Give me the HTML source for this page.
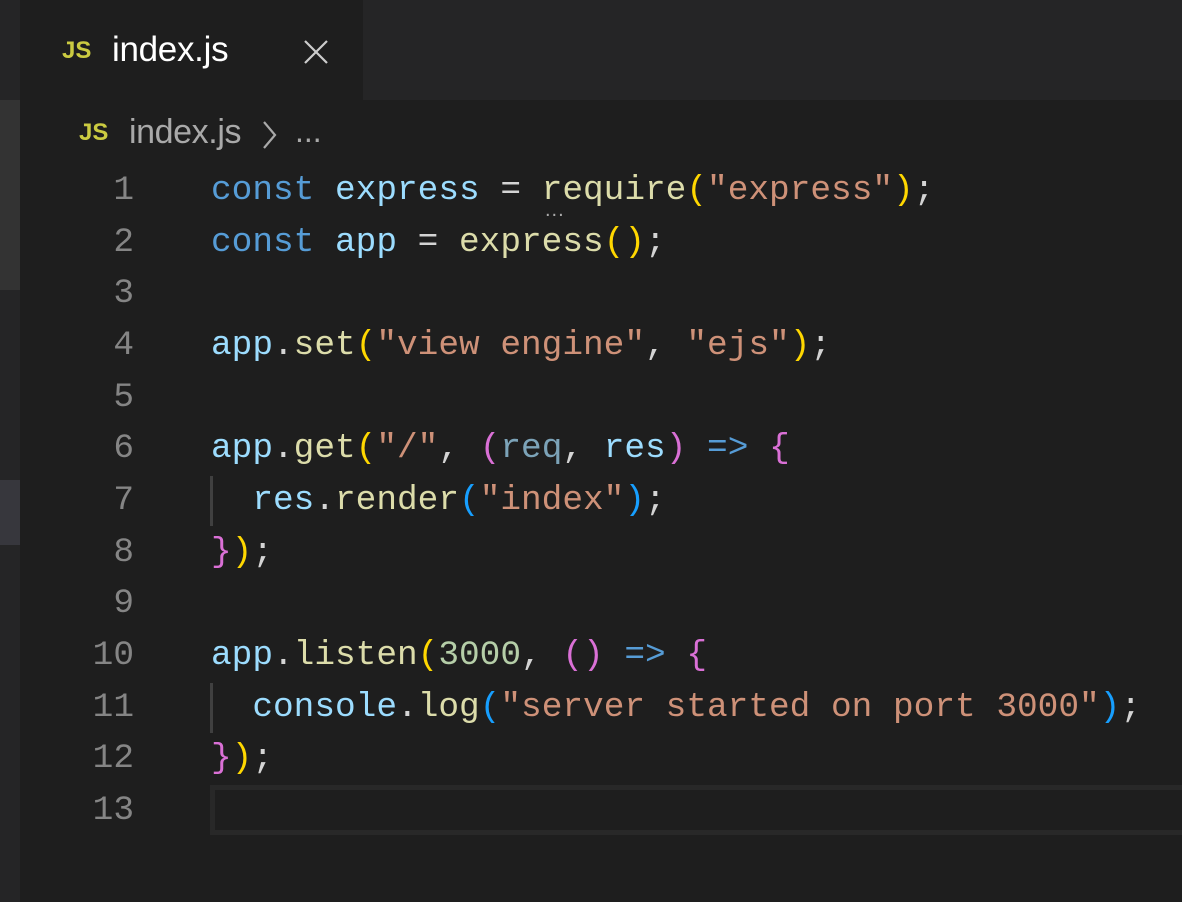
<!DOCTYPE html>
<html><head><style>
body{margin:0;width:1182px;height:902px;background:#1e1e1e;overflow:hidden;position:relative;font-family:"Liberation Sans",sans-serif}
.tabbar{position:absolute;left:0;top:0;width:1182px;height:100px;background:#252526}
.tab{position:absolute;left:20px;top:0;width:343px;height:100px;background:#1e1e1e}
.strip{position:absolute;left:0;top:100px;width:20px;height:802px;background:#252526}
.js{color:#cbcb41;font-weight:bold;position:absolute}
.code{position:absolute;left:0;top:165px;font-family:"Liberation Mono",monospace;font-size:34.45px;line-height:51.67px;white-space:pre}
.ln{position:absolute;left:60px;width:74px;text-align:right;color:#858585}
.l{position:absolute;left:211px;color:#d4d4d4}
.k{color:#569cd6}.v{color:#9cdcfe}.f{color:#dcdcaa}.s{color:#ce9178}.y{color:#ffd700}.p{color:#da70d6}.b{color:#179fff}.n{color:#b5cea8}
</style></head><body>
<div class="tabbar"></div>
<div class="tab"></div>
<div class="strip"></div>
<div style="position:absolute;left:0;top:100px;width:20px;height:190px;background:#333"></div>
<div style="position:absolute;left:0;top:480px;width:20px;height:65px;background:#37373d"></div>
<div class="js" style="left:62px;top:37px;font-size:24px">JS</div>
<div style="position:absolute;left:112px;top:30px;font-size:35px;color:#fff;letter-spacing:-0.3px">index.js</div>
<svg style="position:absolute;left:303px;top:39px" width="26" height="26"><path d="M2 2L24 24M24 2L2 24" stroke="#ccc" stroke-width="2.2"/></svg>
<div class="js" style="left:79px;top:119px;font-size:24px">JS</div>
<div style="position:absolute;left:129px;top:113px;font-size:34px;color:#a9a9a9;letter-spacing:-0.4px">index.js</div>
<svg style="position:absolute;left:262px;top:120px" width="16" height="30"><path d="M2 2L13 15L2 28" stroke="#a9a9a9" stroke-width="2.2" fill="none"/></svg>
<div style="position:absolute;left:295px;top:113px;font-size:32px;color:#a9a9a9">...</div>
<div style="position:absolute;left:210px;top:785px;width:980px;height:50px;border:5px solid #282828;box-sizing:border-box"></div>
<div style="position:absolute;left:210px;top:476px;width:3px;height:50px;background:#404040"></div>
<div style="position:absolute;left:210px;top:683px;width:3px;height:50px;background:#404040"></div>
<div class="code">
<div class="ln" style="top:0">1</div><div class="ln" style="top:51.67px">2</div><div class="ln" style="top:103.3px">3</div><div class="ln" style="top:155px">4</div><div class="ln" style="top:206.7px">5</div><div class="ln" style="top:258.3px">6</div><div class="ln" style="top:310px">7</div><div class="ln" style="top:361.7px">8</div><div class="ln" style="top:413.3px">9</div><div class="ln" style="top:465px">10</div><div class="ln" style="top:516.7px">11</div><div class="ln" style="top:568.3px">12</div><div class="ln" style="top:620px">13</div>
<div class="l" style="top:0"><span class="k">const</span> <span class="v">express</span> = <span class="f">require</span><span class="y">(</span><span class="s">"express"</span><span class="y">)</span>;</div>
<div class="l" style="top:51.67px"><span class="k">const</span> <span class="v">app</span> = <span class="f">express</span><span class="y">()</span>;</div>
<div class="l" style="top:155px"><span class="v">app</span>.<span class="f">set</span><span class="y">(</span><span class="s">"view engine"</span>, <span class="s">"ejs"</span><span class="y">)</span>;</div>
<div class="l" style="top:258.3px"><span class="v">app</span>.<span class="f">get</span><span class="y">(</span><span class="s">"/"</span>, <span class="p">(</span><span style="color:#7ca3b8">req</span>, <span class="v">res</span><span class="p">)</span> <span class="k">=&gt;</span> <span class="p">{</span></div>
<div class="l" style="top:310px">  <span class="v">res</span>.<span class="f">render</span><span class="b">(</span><span class="s">"index"</span><span class="b">)</span>;</div>
<div class="l" style="top:361.7px"><span class="p">}</span><span class="y">)</span>;</div>
<div class="l" style="top:465px"><span class="v">app</span>.<span class="f">listen</span><span class="y">(</span><span class="n">3000</span>, <span class="p">()</span> <span class="k">=&gt;</span> <span class="p">{</span></div>
<div class="l" style="top:516.7px">  <span class="v">console</span>.<span class="f">log</span><span class="b">(</span><span class="s">"server started on port 3000"</span><span class="b">)</span>;</div>
<div class="l" style="top:568.3px"><span class="p">}</span><span class="y">)</span>;</div>
</div>
<div style="position:absolute;left:545px;top:205px;font-size:20px;color:#aaa;letter-spacing:1px;line-height:10px">...</div>
</body></html>
